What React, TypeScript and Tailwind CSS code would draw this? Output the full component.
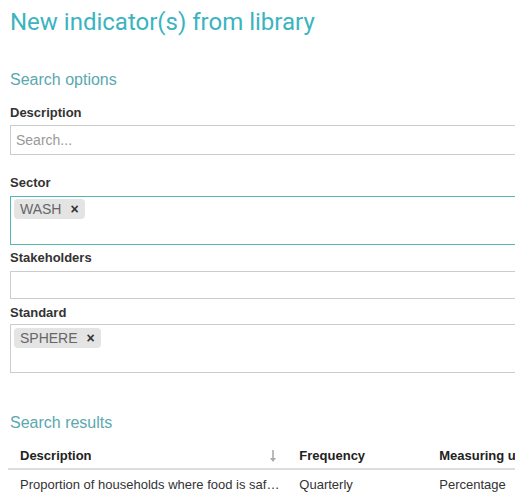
import React from 'react';

const sans = { fontFamily: '"Liberation Sans", Arial, sans-serif' };

function Tag({ label }: { label: string }) {
  return (
    <span className="flex items-center h-[20px] rounded-[4px] bg-[#e4e4e4] pl-[6px] pr-[6px] text-[14px] leading-[20px] text-[#666]">
      {label}
      <span className="ml-[9px] text-[14px] font-bold text-[#333]">×</span>
    </span>
  );
}

function Label({ children, className = '' }: { children: React.ReactNode; className?: string }) {
  return <div className={`text-[13px] leading-[15px] font-bold text-[#333] ${className}`}>{children}</div>;
}

export default function App() {
  return (
    <div className="w-[515px] h-[499px] overflow-hidden bg-white" style={sans}>
      <div className="w-[620px] pl-[10px]">
        <h1 className="pt-[9px] text-[24px] leading-[26px] font-normal text-[#3ab4bf]" style={{ fontFamily: 'Roboto, sans-serif' }}>
          New indicator(s) from library
        </h1>

        <h2 className="mt-[36px] text-[16px] leading-[18px] font-normal text-[#5aa8b0]">Search options</h2>

        <Label className="mt-[16px] mb-[5px]">Description</Label>
        <div className="h-[30px] border border-[#ccc] flex items-center pl-[5px] text-[14px] text-[#999]">Search...</div>

        <Label className="mt-[20px] mb-[6px]">Sector</Label>
        <div className="h-[49px] border border-[#4fbab6] pl-[3px] pt-[2px] flex items-start">
          <Tag label="WASH" />
        </div>

        <Label className="mt-[5px] mb-[6px]">Stakeholders</Label>
        <div className="h-[28px] border border-[#ccc]" />

        <Label className="mt-[6px] mb-[4px]">Standard</Label>
        <div className="h-[49px] border border-[#ccc] pl-[3px] pt-[3px] flex items-start">
          <Tag label="SPHERE" />
        </div>

        <h2 className="mt-[41px] text-[16px] leading-[18px] font-normal text-[#5aa8b0]">Search results</h2>

        <table className="mt-[8px] -ml-[2px] border-collapse text-[13px] leading-[15px] text-[#333]">
          <thead>
            <tr className="border-b-2 border-[#ddd]">
              <th className="w-[280px] pl-[12px] pr-[12px] pt-[8px] pb-[5px] text-left font-bold text-[#222]">
                <div className="flex items-center justify-between">
                  <span>Description</span>
                  <svg width="8" height="14" viewBox="0 0 8 14" className="mr-[-2px]">
                    <path d="M4 1 V11" stroke="#aaa" strokeWidth="1.6" />
                    <path d="M1 9 L4 13 L7 9 Z" fill="#aaa" />
                  </svg>
                </div>
              </th>
              <th className="w-[145px] pl-[12px] pt-[8px] pb-[5px] text-left font-bold text-[#222]">Frequency</th>
              <th className="w-[200px] pl-[12px] pt-[8px] pb-[5px] text-left font-bold text-[#222] whitespace-nowrap">Measuring unit</th>
            </tr>
          </thead>
          <tbody>
            <tr>
              <td className="pl-[12px] pt-[7px] pb-[8px] whitespace-nowrap">Proportion of households where food is saf…</td>
              <td className="pl-[12px] pt-[7px] pb-[8px]">Quarterly</td>
              <td className="pl-[12px] pt-[7px] pb-[8px]">Percentage</td>
            </tr>
          </tbody>
        </table>
      </div>
    </div>
  );
}
